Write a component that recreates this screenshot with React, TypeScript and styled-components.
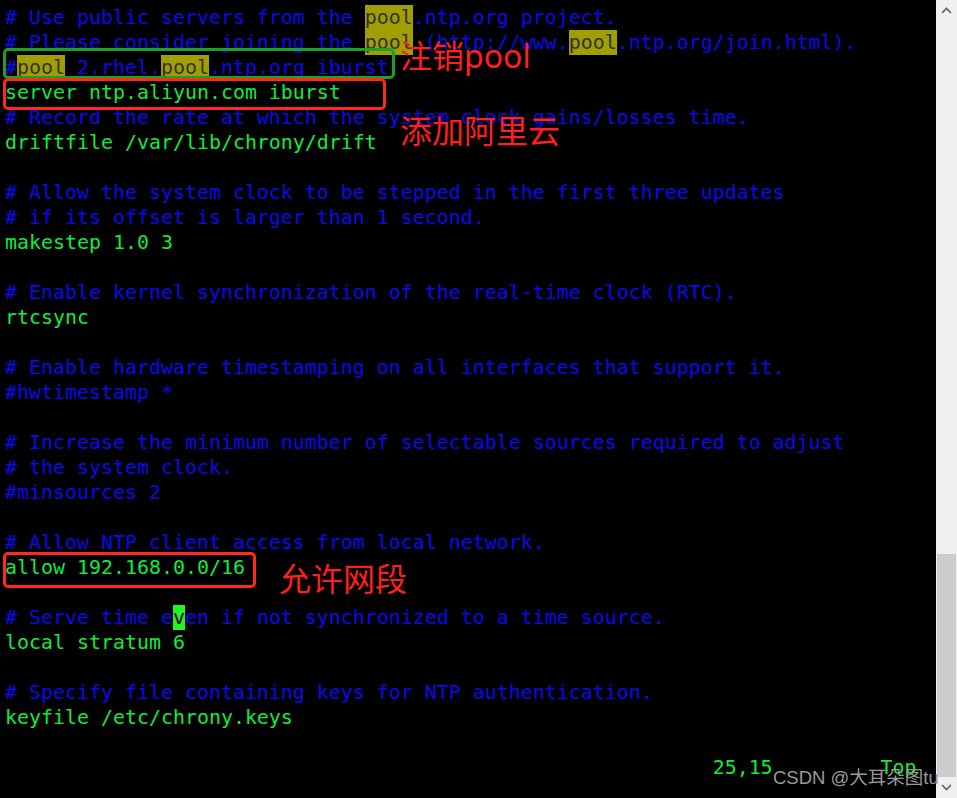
import React from "react";
import styled, { createGlobalStyle } from "styled-components";

const Global = createGlobalStyle`
  html, body { margin: 0; padding: 0; background: #000; }
  #root { height: 100vh; }
`;

type Kind = "c" | "n" | "h" | "cur";
type Seg = { k: Kind; t: string };
const c = (t: string): Seg => ({ k: "c", t });
const n = (t: string): Seg => ({ k: "n", t });
const h = (t: string): Seg => ({ k: "h", t });
const cur = (t: string): Seg => ({ k: "cur", t });

const lines: Seg[][] = [
  [c("# Use public servers from the "), h("pool"), c(".ntp.org project.")],
  [c("# Please consider joining the "), h("pool"), c(" (http://www."), h("pool"), c(".ntp.org/join.html).")],
  [c("#"), h("pool"), c(" 2.rhel."), h("pool"), c(".ntp.org iburst")],
  [n("server ntp.aliyun.com iburst")],
  [c("# Record the rate at which the system clock gains/losses time.")],
  [n("driftfile /var/lib/chrony/drift")],
  [],
  [c("# Allow the system clock to be stepped in the first three updates")],
  [c("# if its offset is larger than 1 second.")],
  [n("makestep 1.0 3")],
  [],
  [c("# Enable kernel synchronization of the real-time clock (RTC).")],
  [n("rtcsync")],
  [],
  [c("# Enable hardware timestamping on all interfaces that support it.")],
  [c("#hwtimestamp *")],
  [],
  [c("# Increase the minimum number of selectable sources required to adjust")],
  [c("# the system clock.")],
  [c("#minsources 2")],
  [],
  [c("# Allow NTP client access from local network.")],
  [n("allow 192.168.0.0/16")],
  [],
  [c("# Serve time e"), cur("v"), c("en if not synchronized to a time source.")],
  [n("local stratum 6")],
  [],
  [c("# Specify file containing keys for NTP authentication.")],
  [n("keyfile /etc/chrony.keys")],
  [],
  [n(" ".repeat(59) + "25,15" + " ".repeat(9) + "Top")],
];

const Page = styled.div`
  position: relative;
  display: flex;
  height: 100%;
  overflow: hidden;
`;

const Terminal = styled.div`
  position: relative;
  flex: 1;
  background: #000;
  padding: 5px 0 0 5px;
  font-family: "DejaVu Sans Mono", monospace;
  font-size: 19.93px;
  overflow: hidden;
`;

const Row = styled.div`
  height: 25px;
  line-height: 25px;
  white-space: pre;
`;

const colors: Record<Kind, { fg: string; bg: string }> = {
  c: { fg: "#0a0aea", bg: "transparent" },
  n: { fg: "#12ea3c", bg: "transparent" },
  h: { fg: "#333333", bg: "#a09e00" },
  cur: { fg: "#000000", bg: "#22f522" },
};

const Span = styled.span<{ $k: Kind }>`
  color: ${(p) => colors[p.$k].fg};
  background: ${(p) => colors[p.$k].bg};
  display: inline-block;
  height: 25px;
  vertical-align: top;
`;

const Box = styled.div<{ $color: string; $l: number; $t: number; $w: number; $h: number }>`
  position: absolute;
  left: ${(p) => p.$l}px;
  top: ${(p) => p.$t}px;
  width: ${(p) => p.$w}px;
  height: ${(p) => p.$h}px;
  box-sizing: border-box;
  border: 3.5px solid ${(p) => p.$color};
  border-radius: 5px;
`;

const Note = styled.div<{ $l: number; $t: number }>`
  position: absolute;
  left: ${(p) => p.$l}px;
  top: ${(p) => p.$t}px;
  color: #ff1f1f;
  font-family: "Noto Sans", "Noto Sans CJK SC", sans-serif;
  font-size: 32px;
  line-height: 1;
  white-space: nowrap;
`;

const Scrollbar = styled.div`
  width: 21px;
  background: #f0f0f0;
  display: flex;
  flex-direction: column;
`;

const Arrow = styled.div`
  height: 21px;
  display: flex;
  align-items: center;
  justify-content: center;
`;

const Track = styled.div`
  flex: 1;
  display: flex;
  flex-direction: column;
  justify-content: flex-end;
`;

const Thumb = styled.div`
  height: 223px;
  margin: 0 1px;
  background: #cdcdcd;
`;

const Watermark = styled.div`
  position: absolute;
  left: 773px;
  top: 766px;
  color: #999999;
  font-family: "Liberation Sans", "Noto Sans CJK SC", sans-serif;
  font-size: 18.5px;
  line-height: 24px;
  white-space: nowrap;
  z-index: 2;
`;

const Chevron = ({ up }: { up?: boolean }) => (
  <svg width="11" height="7" viewBox="0 0 11 7">
    <path
      d={up ? "M1 6 L5.5 1.5 L10 6" : "M1 1 L5.5 5.5 L10 1"}
      fill="none"
      stroke="#606060"
      strokeWidth="1.6"
    />
  </svg>
);

export default function App() {
  return (
    <>
      <Global />
      <Page>
        <Terminal>
          {lines.map((segs, i) => (
            <Row key={i}>
              {segs.map((s, j) => (
                <Span key={j} $k={s.k}>
                  {s.t}
                </Span>
              ))}
            </Row>
          ))}
          <Box $color="#1fa024" $l={3} $t={48} $w={392} $h={31} />
          <Box $color="#ff2a1a" $l={3} $t={78} $w={383} $h={32} />
          <Box $color="#ff2a1a" $l={3} $t={552} $w={253} $h={36} />
          <Note $l={400} $t={40}>注销pool</Note>
          <Note $l={400} $t={115}>添加阿里云</Note>
          <Note $l={279} $t={563}>允许网段</Note>
        </Terminal>
        <Scrollbar>
          <Arrow>
            <Chevron up />
          </Arrow>
          <Track>
            <Thumb />
          </Track>
          <Arrow>
            <Chevron />
          </Arrow>
        </Scrollbar>
        <Watermark>CSDN @大耳朵图tu</Watermark>
      </Page>
    </>
  );
}
